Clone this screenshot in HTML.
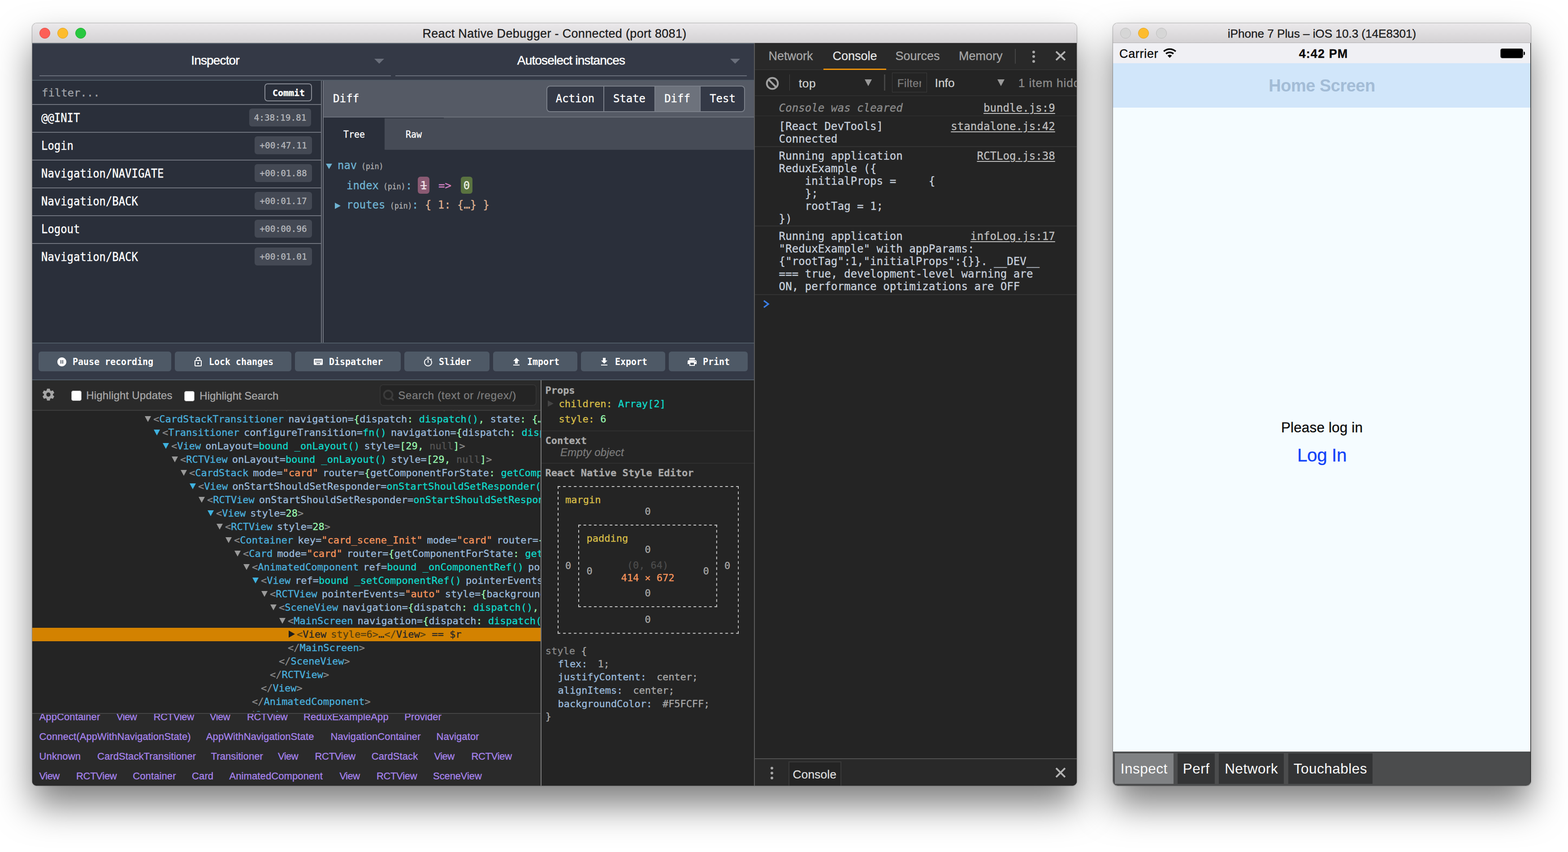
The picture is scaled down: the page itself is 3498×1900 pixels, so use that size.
<!DOCTYPE html>
<html lang="en"><head><meta charset="utf-8"><title>React Native Debugger</title>
<style>
html,body{margin:0;padding:0;background:#fff;}
body{width:3498px;height:1900px;position:relative;overflow:hidden;}
.t{position:absolute;line-height:0;white-space:pre;-webkit-text-stroke:0.35px;}
.t::before{content:"";display:inline-block;height:100px;width:0;}
.s{font-family:"Liberation Sans",sans-serif;}
.n{font-family:"DejaVu Sans Mono","Liberation Mono",monospace;}
.win{position:absolute;overflow:hidden;border-radius:10px;box-shadow:0 0 0 1px rgba(0,0,0,0.25),0 44px 80px 0 rgba(0,0,0,0.5),0 0 5px rgba(0,0,0,0.1);}
.pg{position:absolute;width:3498px;height:1900px;}
.tb{position:absolute;background:linear-gradient(#ebe9eb,#d3d1d3);box-shadow:inset 0 1px 0 #f4f3f4, inset 0 -1px 0 #b3b1b3;}
.dot{position:absolute;width:24px;height:24px;border-radius:50%;box-sizing:border-box;}
</style></head>
<body>
<div class="win" style="left:72px;top:51.6px;width:2330px;height:1700.7px;"><div class="pg" style="left:-72px;top:-51.6px;">
<div class="tb" style="left:72px;top:51.6px;width:2330px;height:44.4px;"></div>
<div class="dot" style="left:88px;top:62px;background:#fc5f57;border:1px solid #e0443e;"></div><div class="dot" style="left:128px;top:62px;background:#fdbc2e;border:1px solid #dea123;"></div><div class="dot" style="left:168px;top:62px;background:#28c840;border:1px solid #1dab2c;"></div>
<div class="t s" style="left:1237px;transform:translateX(-50%);top:-15.6px;font-size:27px;color:#1c1c1c;letter-spacing:0.32px;">React Native Debugger - Connected (port 8081)</div>
<div style="position:absolute;left:72px;top:96px;width:2330px;height:1656px;background:#242424;"></div>
<div style="position:absolute;left:72px;top:96px;width:1610px;height:84px;background:#343946;"></div>
<div style="position:absolute;left:72px;top:96px;width:1610px;height:2px;background:#4f5a65;"></div>
<div style="position:absolute;left:72px;top:178px;width:1610px;height:2px;background:#4f5a65;"></div>
<div style="position:absolute;left:88px;top:168px;width:784px;height:2px;background:#6a6f7b;"></div>
<div style="position:absolute;left:882px;top:168px;width:784px;height:2px;background:#6a6f7b;"></div>
<div style="position:absolute;left:835px;top:131px;width:0;height:0;border-left:11.0px solid transparent;border-right:11.0px solid transparent;border-top:11px solid #6a6f7b;"></div>
<div style="position:absolute;left:1629px;top:131px;width:0;height:0;border-left:11.0px solid transparent;border-right:11.0px solid transparent;border-top:11px solid #6a6f7b;"></div>
<div class="t s" style="left:480px;transform:translateX(-50%);top:44.3px;font-size:28px;color:#fff;letter-spacing:-0.85px;-webkit-text-stroke:0.5px #fff;">Inspector</div>
<div class="t s" style="left:1274px;transform:translateX(-50%);top:44.3px;font-size:28px;color:#fff;letter-spacing:-0.82px;-webkit-text-stroke:0.5px #fff;">Autoselect instances</div>
<div style="position:absolute;left:72px;top:180px;width:650px;height:584px;background:#2a2f3a;"></div>
<div style="position:absolute;left:716px;top:180px;width:2px;height:584px;background:#6f737d;"></div>
<div style="position:absolute;left:720px;top:180px;width:2px;height:584px;background:#6f737d;"></div>
<div class="t n" style="left:93px;top:114.5px;font-size:23.04px;color:#a0a3a8;transform-origin:0 0;transform:scaleX(1.0382);">filter...</div>
<div style="position:absolute;left:590px;top:186px;width:106px;height:39.5px;box-sizing:border-box;border:2px solid #888c95;border-radius:7px;"></div>
<div class="t n" style="left:643.5px;transform:translateX(-50%) scaleX(1.0382);top:113.6px;font-size:19.2px;color:#fff;font-weight:700;">Commit</div>
<div style="position:absolute;left:72px;top:232px;width:644px;height:2px;background:#6f737d;"></div>
<div class="t n" style="left:91.5px;top:172.2px;font-size:26.64px;color:#fff;transform-origin:0 0;transform:scaleX(0.8979);">@@INIT</div>
<div style="position:absolute;left:556px;top:242px;width:138px;height:40px;background:#444954;border-radius:6px;"></div>
<div class="t n" style="left:625.0px;transform:translateX(-50%) scaleX(0.9967);top:169.3px;font-size:19.5px;color:#b6b8bc;">4:38:19.81</div>
<div style="position:absolute;left:72px;top:294px;width:644px;height:2px;background:#6f737d;"></div>
<div class="t n" style="left:91.5px;top:234.2px;font-size:26.64px;color:#fff;transform-origin:0 0;transform:scaleX(0.8979);">Login</div>
<div style="position:absolute;left:568px;top:304px;width:128px;height:40px;background:#444954;border-radius:6px;"></div>
<div class="t n" style="left:632.0px;transform:translateX(-50%) scaleX(0.9967);top:231.3px;font-size:19.5px;color:#b6b8bc;">+00:47.11</div>
<div style="position:absolute;left:72px;top:356px;width:644px;height:2px;background:#6f737d;"></div>
<div class="t n" style="left:91.5px;top:296.2px;font-size:26.64px;color:#fff;transform-origin:0 0;transform:scaleX(0.8979);">Navigation/NAVIGATE</div>
<div style="position:absolute;left:568px;top:366px;width:128px;height:40px;background:#444954;border-radius:6px;"></div>
<div class="t n" style="left:632.0px;transform:translateX(-50%) scaleX(0.9967);top:293.3px;font-size:19.5px;color:#b6b8bc;">+00:01.88</div>
<div style="position:absolute;left:72px;top:418px;width:644px;height:2px;background:#6f737d;"></div>
<div class="t n" style="left:91.5px;top:358.2px;font-size:26.64px;color:#fff;transform-origin:0 0;transform:scaleX(0.8979);">Navigation/BACK</div>
<div style="position:absolute;left:568px;top:428px;width:128px;height:40px;background:#444954;border-radius:6px;"></div>
<div class="t n" style="left:632.0px;transform:translateX(-50%) scaleX(0.9967);top:355.3px;font-size:19.5px;color:#b6b8bc;">+00:01.17</div>
<div style="position:absolute;left:72px;top:480px;width:644px;height:2px;background:#6f737d;"></div>
<div class="t n" style="left:91.5px;top:420.2px;font-size:26.64px;color:#fff;transform-origin:0 0;transform:scaleX(0.8979);">Logout</div>
<div style="position:absolute;left:568px;top:490px;width:128px;height:40px;background:#444954;border-radius:6px;"></div>
<div class="t n" style="left:632.0px;transform:translateX(-50%) scaleX(0.9967);top:417.3px;font-size:19.5px;color:#b6b8bc;">+00:00.96</div>
<div style="position:absolute;left:72px;top:542px;width:644px;height:2px;background:#6f737d;"></div>
<div class="t n" style="left:91.5px;top:482.2px;font-size:26.64px;color:#fff;transform-origin:0 0;transform:scaleX(0.8979);">Navigation/BACK</div>
<div style="position:absolute;left:568px;top:552px;width:128px;height:40px;background:#444954;border-radius:6px;"></div>
<div class="t n" style="left:632.0px;transform:translateX(-50%) scaleX(0.9967);top:479.3px;font-size:19.5px;color:#b6b8bc;">+00:01.01</div>
<div style="position:absolute;left:722px;top:180px;width:960px;height:584px;background:#2a2f3a;"></div>
<div style="position:absolute;left:722px;top:180px;width:960px;height:82px;background:#555a65;"></div>
<div style="position:absolute;left:722px;top:260px;width:960px;height:2px;background:#6b707a;"></div>
<div class="t n" style="left:742.5px;top:127.8px;font-size:25.27px;color:#fff;transform-origin:0 0;transform:scaleX(0.9583);">Diff</div>
<div style="position:absolute;left:1218.5px;top:190.5px;width:443.0px;height:59.0px;box-sizing:border-box;border:2px solid #7b808a;border-radius:8px;background:#343946;overflow:hidden;"><div style="position:absolute;left:240.5px;top:0;width:100.5px;height:100%;background:#6d727c;"></div><div style="position:absolute;left:125.20000000000005px;top:0;width:2px;height:100%;background:#7b808a;"></div><div style="position:absolute;left:239.5px;top:0;width:2px;height:100%;background:#7b808a;"></div><div style="position:absolute;left:340.0px;top:0;width:2px;height:100%;background:#7b808a;"></div></div>
<div class="t n" style="left:1282.6px;transform:translateX(-50%) scaleX(0.9583);top:127.8px;font-size:24.96px;color:#fff;">Action</div>
<div class="t n" style="left:1403.8px;transform:translateX(-50%) scaleX(0.9583);top:127.8px;font-size:24.96px;color:#fff;">State</div>
<div class="t n" style="left:1511.2px;transform:translateX(-50%) scaleX(0.9583);top:127.8px;font-size:24.96px;color:#fff;">Diff</div>
<div class="t n" style="left:1611.5px;transform:translateX(-50%) scaleX(0.9583);top:127.8px;font-size:24.96px;color:#fff;">Test</div>
<div style="position:absolute;left:722px;top:262px;width:960px;height:72px;background:#464b56;"></div>
<div style="position:absolute;left:722px;top:262px;width:136px;height:72px;background:#2a2f3a;"></div>
<div style="position:absolute;left:858px;top:262px;width:132px;height:1.5px;background:#2f343f;"></div>
<div class="t n" style="left:789.7px;transform:translateX(-50%) scaleX(0.9228);top:207.4px;font-size:21.6px;color:#fff;">Tree</div>
<div class="t n" style="left:923px;transform:translateX(-50%) scaleX(0.9228);top:207.4px;font-size:21.6px;color:#fff;">Raw</div>
<div style="position:absolute;left:726.6px;top:364.5px;width:0;height:0;border-left:7.1px solid transparent;border-right:7.1px solid transparent;border-top:12.2px solid #6fb3d2;"></div>
<div class="t n" style="left:752.5px;top:277.2px;font-size:25.44px;color:#6fb3d2;transform-origin:0 0;transform:scaleX(0.9403);">nav</div>
<div class="t n" style="left:806px;top:277.2px;font-size:17.49px;color:#b0b0b0;transform-origin:0 0;transform:scaleX(0.9403);">(pin)</div>
<div class="t n" style="left:773px;top:321.5px;font-size:25.44px;color:#6fb3d2;transform-origin:0 0;transform:scaleX(0.9403);">index</div>
<div class="t n" style="left:855px;top:321.5px;font-size:17.49px;color:#b0b0b0;transform-origin:0 0;transform:scaleX(0.9403);">(pin)</div>
<div class="t n" style="left:904.5px;top:321.5px;font-size:25.44px;color:#6fb3d2;transform-origin:0 0;transform:scaleX(0.9403);">:</div>
<div style="position:absolute;left:931.8px;top:394px;width:26.2px;height:37.6px;background:#8a5a73;border-radius:6px;"></div>
<div class="t n" style="left:944.9px;transform:translateX(-50%) scaleX(0.9403);top:321.5px;font-size:25.44px;color:#f3e6ec;text-decoration:line-through;">1</div>
<div class="t n" style="left:978px;top:321.5px;font-size:25.44px;color:#d381c3;transform-origin:0 0;transform:scaleX(0.9403);">=&gt;</div>
<div style="position:absolute;left:1028px;top:394px;width:26px;height:37.6px;background:#5a7340;border-radius:6px;"></div>
<div class="t n" style="left:1041px;transform:translateX(-50%) scaleX(0.9403);top:321.5px;font-size:25.44px;color:#eef3e6;">0</div>
<div style="position:absolute;left:747px;top:452px;width:0;height:0;border-top:7.0px solid transparent;border-bottom:7.0px solid transparent;border-left:13px solid #6fb3d2;"></div>
<div class="t n" style="left:773px;top:365px;font-size:25.44px;color:#6fb3d2;transform-origin:0 0;transform:scaleX(0.9403);">routes</div>
<div class="t n" style="left:870px;top:365px;font-size:17.49px;color:#b0b0b0;transform-origin:0 0;transform:scaleX(0.9403);">(pin)</div>
<div class="t n" style="left:919px;top:365px;font-size:25.44px;color:#6fb3d2;transform-origin:0 0;transform:scaleX(0.9403);">:</div>
<div class="t n" style="left:947.5px;top:365px;font-size:25.44px;color:#deaf8f;transform-origin:0 0;transform:scaleX(0.9403);">{ 1: {…} }</div>
<div style="position:absolute;left:72px;top:764px;width:1610px;height:84px;background:#343946;"></div>
<div style="position:absolute;left:72px;top:764px;width:1610px;height:2px;background:#4f5a65;"></div>
<div style="position:absolute;left:72px;top:846px;width:1610px;height:2px;background:#4f5a65;"></div>
<div style="position:absolute;left:86px;top:784px;width:296px;height:44px;background:#4e5966;border-radius:6px;"></div>
<svg style="position:absolute;left:125.5px;top:795.3px" width="24" height="24" viewBox="0 0 24 24"><path fill="#fff" d="M12 2C6.48 2 2 6.48 2 12s4.48 10 10 10 10-4.48 10-10S17.52 2 12 2zm-1 14H9V8h2v8zm4 0h-2V8h2v8z"/></svg>
<div class="t n" style="left:162.0px;top:714px;font-size:21.2px;color:#fff;transform-origin:0 0;transform:scaleX(0.9403);font-weight:700;-webkit-text-stroke:0;">Pause recording</div>
<div style="position:absolute;left:390px;top:784px;width:260px;height:44px;background:#4e5966;border-radius:6px;"></div>
<svg style="position:absolute;left:429.5px;top:795.3px" width="24" height="24" viewBox="0 0 24 24"><path fill="#fff" d="M12 17c1.1 0 2-.9 2-2s-.9-2-2-2-2 .9-2 2 .9 2 2 2zm6-9h-1V6c0-2.76-2.24-5-5-5S7 3.24 7 6v2H6c-1.1 0-2 .9-2 2v10c0 1.1.9 2 2 2h12c1.1 0 2-.9 2-2V10c0-1.1-.9-2-2-2zM8.9 6c0-1.71 1.39-3.1 3.1-3.1s3.1 1.39 3.1 3.1v2H8.9V6zM18 20H6V10h12v10z"/></svg>
<div class="t n" style="left:466.0px;top:714px;font-size:21.2px;color:#fff;transform-origin:0 0;transform:scaleX(0.9403);font-weight:700;-webkit-text-stroke:0;">Lock changes</div>
<div style="position:absolute;left:658px;top:784px;width:236px;height:44px;background:#4e5966;border-radius:6px;"></div>
<svg style="position:absolute;left:697.5px;top:795.3px" width="24" height="24" viewBox="0 0 24 24"><path fill="#fff" d="M20 5H4c-1.1 0-1.99.9-1.99 2L2 17c0 1.1.9 2 2 2h16c1.1 0 2-.9 2-2V7c0-1.1-.9-2-2-2zm-9 3h2v2h-2V8zm0 3h2v2h-2v-2zM8 8h2v2H8V8zm0 3h2v2H8v-2zm-1 2H5v-2h2v2zm0-3H5V8h2v2zm9 7H8v-2h8v2zm0-4h-2v-2h2v2zm0-3h-2V8h2v2zm3 3h-2v-2h2v2zm0-3h-2V8h2v2z"/></svg>
<div class="t n" style="left:734.0px;top:714px;font-size:21.2px;color:#fff;transform-origin:0 0;transform:scaleX(0.9403);font-weight:700;-webkit-text-stroke:0;">Dispatcher</div>
<div style="position:absolute;left:902px;top:784px;width:190px;height:44px;background:#4e5966;border-radius:6px;"></div>
<svg style="position:absolute;left:942.5px;top:795.3px" width="24" height="24" viewBox="0 0 24 24"><path fill="#fff" d="M15 1H9v2h6V1zm-4 13h2V8h-2v6zm8.03-6.61l1.42-1.42c-.43-.51-.9-.99-1.41-1.41l-1.42 1.42C16.07 4.74 14.12 4 12 4c-4.97 0-9 4.03-9 9s4.02 9 9 9 9-4.03 9-9c0-2.12-.74-4.07-1.97-5.61zM12 20c-3.87 0-7-3.13-7-7s3.13-7 7-7 7 3.13 7 7-3.13 7-7 7z"/></svg>
<div class="t n" style="left:979.0px;top:714px;font-size:21.2px;color:#fff;transform-origin:0 0;transform:scaleX(0.9403);font-weight:700;-webkit-text-stroke:0;">Slider</div>
<div style="position:absolute;left:1100px;top:784px;width:188px;height:44px;background:#4e5966;border-radius:6px;"></div>
<svg style="position:absolute;left:1139.5px;top:795.3px" width="24" height="24" viewBox="0 0 24 24"><path fill="#fff" d="M9 16h6v-6h4l-7-7-7 7h4zm-4 2h14v2H5z"/></svg>
<div class="t n" style="left:1176.0px;top:714px;font-size:21.2px;color:#fff;transform-origin:0 0;transform:scaleX(0.9403);font-weight:700;-webkit-text-stroke:0;">Import</div>
<div style="position:absolute;left:1296px;top:784px;width:188px;height:44px;background:#4e5966;border-radius:6px;"></div>
<svg style="position:absolute;left:1335.5px;top:795.3px" width="24" height="24" viewBox="0 0 24 24"><path fill="#fff" d="M19 9h-4V3H9v6H5l7 7 7-7zM5 18v2h14v-2H5z"/></svg>
<div class="t n" style="left:1372.0px;top:714px;font-size:21.2px;color:#fff;transform-origin:0 0;transform:scaleX(0.9403);font-weight:700;-webkit-text-stroke:0;">Export</div>
<div style="position:absolute;left:1492px;top:784px;width:176px;height:44px;background:#4e5966;border-radius:6px;"></div>
<svg style="position:absolute;left:1531.5px;top:795.3px" width="24" height="24" viewBox="0 0 24 24"><path fill="#fff" d="M19 8H5c-1.66 0-3 1.34-3 3v6h4v4h12v-4h4v-6c0-1.66-1.34-3-3-3zm-3 11H8v-5h8v5zm3-7c-.55 0-1-.45-1-1s.45-1 1-1 1 .45 1 1-.45 1-1 1zm-1-9H6v4h12V3z"/></svg>
<div class="t n" style="left:1568.0px;top:714px;font-size:21.2px;color:#fff;transform-origin:0 0;transform:scaleX(0.9403);font-weight:700;-webkit-text-stroke:0;">Print</div>
<div style="position:absolute;left:72px;top:848px;width:1610px;height:904px;background:#242424;"></div>
<div style="position:absolute;left:72px;top:848px;width:1134px;height:67px;background:#2a2a2a;"></div>
<div style="position:absolute;left:72px;top:914.3px;width:1134px;height:1.9px;background:#3d3d3d;"></div>
<svg style="position:absolute;left:92px;top:864px" width="32" height="32" viewBox="0 0 24 24"><path fill="#a5a5a5" d="M19.43 12.98c.04-.32.07-.64.07-.98s-.03-.66-.07-.98l2.11-1.65c.19-.15.24-.42.12-.64l-2-3.46c-.12-.22-.39-.3-.61-.22l-2.49 1c-.52-.4-1.08-.73-1.69-.98l-.38-2.65C14.46 2.18 14.25 2 14 2h-4c-.25 0-.46.18-.49.42l-.38 2.65c-.61.25-1.17.59-1.69.98l-2.49-1c-.23-.09-.49 0-.61.22l-2 3.46c-.13.22-.07.49.12.64l2.11 1.65c-.04.32-.07.65-.07.98s.03.66.07.98l-2.11 1.65c-.19.15-.24.42-.12.64l2 3.46c.12.22.39.3.61.22l2.49-1c.52.4 1.08.73 1.69.98l.38 2.65c.03.24.24.42.49.42h4c.25 0 .46-.18.49-.42l.38-2.65c.61-.25 1.17-.59 1.69-.98l2.49 1c.23.09.49 0 .61-.22l2-3.46c.12-.22.07-.49-.12-.64l-2.11-1.65zM12 15.5c-1.93 0-3.5-1.57-3.5-3.5s1.57-3.5 3.5-3.5 3.5 1.57 3.5 3.5-1.57 3.5-3.5 3.5z"/></svg>
<div style="position:absolute;left:158.5px;top:870.5px;width:23.0px;height:23.0px;background:#fff;border-radius:5px;box-shadow:0 0 0 1px #9a9a9a inset;"></div>
<div class="t s" style="left:192.3px;top:789.5px;font-size:24px;color:#a8a8a8;letter-spacing:0.18px;">Highlight Updates</div>
<div style="position:absolute;left:410.5px;top:872.2px;width:23.0px;height:23.0px;background:#fff;border-radius:5px;box-shadow:0 0 0 1px #9a9a9a inset;"></div>
<div class="t s" style="left:445.3px;top:791.4px;font-size:24px;color:#a8a8a8;">Highlight Search</div>
<div style="position:absolute;left:847px;top:857px;width:350px;height:48px;box-sizing:border-box;border:2px solid #333;border-radius:8px;background:#242424;"></div>
<svg style="position:absolute;left:853px;top:868px" width="28" height="28" viewBox="0 0 28 28"><circle cx="13" cy="12.5" r="9.5" fill="none" stroke="#3b3b3b" stroke-width="3.8"/><path d="M19.5 19.5l4.5 4.5" stroke="#3b3b3b" stroke-width="4" stroke-linecap="round"/></svg>
<div class="t s" style="left:888.3px;top:790px;font-size:24px;color:#7d7d7d;letter-spacing:0.76px;">Search (text or /regex/)</div>
<div style="position:absolute;left:72px;top:916px;width:1134px;height:670.6px;overflow:hidden;"><div class="pg" style="left:-72px;top:-916px;"><div style="position:absolute;left:322.5px;top:928.0px;width:0;height:0;border-left:7.7px solid transparent;border-right:7.7px solid transparent;border-top:13.4px solid #9a9a9a;"></div>
<div class="t n" style="left:341.9px;top:841.6px;font-size:22px;color:#9bbbdc;"><span style="color:#8a8a8a">&lt;</span><span style="color:#4ab0de">CardStackTransitioner</span><span style="margin-left:10px;color:#9bbbdc">navigation=</span><span style="color:#98f5ae">{</span><span style="color:#9bbbdc">dispatch</span><span style="color:#98f5ae">: </span><span style="color:#10dacb">dispatch()</span><span style="color:#98f5ae">, </span><span style="color:#9bbbdc">state</span><span style="color:#98f5ae">: </span><span style="color:#98f5ae">{…}</span><span style="color:#98f5ae">}</span><span style="margin-left:10px;color:#9bbbdc">render=</span><span style="color:#10dacb">render()</span></div>
<div style="position:absolute;left:342.5px;top:958.0px;width:0;height:0;border-left:7.7px solid transparent;border-right:7.7px solid transparent;border-top:13.4px solid #3fb2e0;"></div>
<div class="t n" style="left:361.9px;top:871.6px;font-size:22px;color:#9bbbdc;"><span style="color:#8a8a8a">&lt;</span><span style="color:#4ab0de">Transitioner</span><span style="margin-left:10px;color:#9bbbdc">configureTransition=</span><span style="color:#10dacb">fn()</span><span style="margin-left:10px;color:#9bbbdc">navigation=</span><span style="color:#98f5ae">{</span><span style="color:#9bbbdc">dispatch</span><span style="color:#98f5ae">: </span><span style="color:#10dacb">dispatch()</span><span style="color:#98f5ae">, </span><span style="color:#9bbbdc">state</span><span style="color:#98f5ae">: </span><span style="color:#98f5ae">{…}</span><span style="color:#98f5ae">}</span></div>
<div style="position:absolute;left:362.5px;top:988.0px;width:0;height:0;border-left:7.7px solid transparent;border-right:7.7px solid transparent;border-top:13.4px solid #3fb2e0;"></div>
<div class="t n" style="left:381.9px;top:901.6px;font-size:22px;color:#9bbbdc;"><span style="color:#8a8a8a">&lt;</span><span style="color:#4ab0de">View</span><span style="margin-left:10px;color:#9bbbdc">onLayout=</span><span style="color:#10dacb">bound _onLayout()</span><span style="margin-left:10px;color:#9bbbdc">style=</span><span style="color:#98f5ae">[29, </span><span style="color:#555">null</span><span style="color:#98f5ae">]</span><span style="color:#8a8a8a">&gt;</span></div>
<div style="position:absolute;left:382.5px;top:1017.9999999999999px;width:0;height:0;border-left:7.7px solid transparent;border-right:7.7px solid transparent;border-top:13.4px solid #9a9a9a;"></div>
<div class="t n" style="left:401.9px;top:931.6px;font-size:22px;color:#9bbbdc;"><span style="color:#8a8a8a">&lt;</span><span style="color:#4ab0de">RCTView</span><span style="margin-left:10px;color:#9bbbdc">onLayout=</span><span style="color:#10dacb">bound _onLayout()</span><span style="margin-left:10px;color:#9bbbdc">style=</span><span style="color:#98f5ae">[29, </span><span style="color:#555">null</span><span style="color:#98f5ae">]</span><span style="color:#8a8a8a">&gt;</span></div>
<div style="position:absolute;left:402.5px;top:1048.0px;width:0;height:0;border-left:7.7px solid transparent;border-right:7.7px solid transparent;border-top:13.4px solid #9a9a9a;"></div>
<div class="t n" style="left:421.9px;top:961.6px;font-size:22px;color:#9bbbdc;"><span style="color:#8a8a8a">&lt;</span><span style="color:#4ab0de">CardStack</span><span style="margin-left:10px;color:#9bbbdc">mode=</span><span style="color:#f7955c">"card"</span><span style="margin-left:10px;color:#9bbbdc">router=</span><span style="color:#98f5ae">{</span><span style="color:#9bbbdc">getComponentForState</span><span style="color:#98f5ae">: </span><span style="color:#10dacb">getComponentForState()</span><span style="color:#98f5ae">}</span></div>
<div style="position:absolute;left:422.5px;top:1078.0px;width:0;height:0;border-left:7.7px solid transparent;border-right:7.7px solid transparent;border-top:13.4px solid #3fb2e0;"></div>
<div class="t n" style="left:441.9px;top:991.6px;font-size:22px;color:#9bbbdc;"><span style="color:#8a8a8a">&lt;</span><span style="color:#4ab0de">View</span><span style="margin-left:10px;color:#9bbbdc">onStartShouldSetResponder=</span><span style="color:#10dacb">onStartShouldSetResponder()</span><span style="margin-left:10px;color:#9bbbdc">style=</span><span style="color:#98f5ae">{…}</span></div>
<div style="position:absolute;left:442.5px;top:1108.0px;width:0;height:0;border-left:7.7px solid transparent;border-right:7.7px solid transparent;border-top:13.4px solid #9a9a9a;"></div>
<div class="t n" style="left:461.9px;top:1021.6px;font-size:22px;color:#9bbbdc;"><span style="color:#8a8a8a">&lt;</span><span style="color:#4ab0de">RCTView</span><span style="margin-left:10px;color:#9bbbdc">onStartShouldSetResponder=</span><span style="color:#10dacb">onStartShouldSetResponder()</span><span style="margin-left:10px;color:#9bbbdc">style=</span><span style="color:#98f5ae">{…}</span></div>
<div style="position:absolute;left:462.5px;top:1138.0px;width:0;height:0;border-left:7.7px solid transparent;border-right:7.7px solid transparent;border-top:13.4px solid #3fb2e0;"></div>
<div class="t n" style="left:481.9px;top:1051.6px;font-size:22px;color:#9bbbdc;"><span style="color:#8a8a8a">&lt;</span><span style="color:#4ab0de">View</span><span style="margin-left:10px;color:#9bbbdc">style=</span><span style="color:#98f5ae">28</span><span style="color:#8a8a8a">&gt;</span></div>
<div style="position:absolute;left:482.5px;top:1168.0px;width:0;height:0;border-left:7.7px solid transparent;border-right:7.7px solid transparent;border-top:13.4px solid #9a9a9a;"></div>
<div class="t n" style="left:501.9px;top:1081.6px;font-size:22px;color:#9bbbdc;"><span style="color:#8a8a8a">&lt;</span><span style="color:#4ab0de">RCTView</span><span style="margin-left:10px;color:#9bbbdc">style=</span><span style="color:#98f5ae">28</span><span style="color:#8a8a8a">&gt;</span></div>
<div style="position:absolute;left:502.5px;top:1198.0px;width:0;height:0;border-left:7.7px solid transparent;border-right:7.7px solid transparent;border-top:13.4px solid #9a9a9a;"></div>
<div class="t n" style="left:521.9px;top:1111.6px;font-size:22px;color:#9bbbdc;"><span style="color:#8a8a8a">&lt;</span><span style="color:#4ab0de">Container</span><span style="margin-left:10px;color:#9bbbdc">key=</span><span style="color:#f7955c">"card_scene_Init"</span><span style="margin-left:10px;color:#9bbbdc">mode=</span><span style="color:#f7955c">"card"</span><span style="margin-left:10px;color:#9bbbdc">router=</span><span style="color:#98f5ae">{</span><span style="color:#9bbbdc">getComponentForState</span><span style="color:#98f5ae">: </span><span style="color:#10dacb">getComponentForState()</span><span style="color:#98f5ae">}</span></div>
<div style="position:absolute;left:522.5px;top:1228.0px;width:0;height:0;border-left:7.7px solid transparent;border-right:7.7px solid transparent;border-top:13.4px solid #9a9a9a;"></div>
<div class="t n" style="left:541.9px;top:1141.6px;font-size:22px;color:#9bbbdc;"><span style="color:#8a8a8a">&lt;</span><span style="color:#4ab0de">Card</span><span style="margin-left:10px;color:#9bbbdc">mode=</span><span style="color:#f7955c">"card"</span><span style="margin-left:10px;color:#9bbbdc">router=</span><span style="color:#98f5ae">{</span><span style="color:#9bbbdc">getComponentForState</span><span style="color:#98f5ae">: </span><span style="color:#10dacb">getComponentForState()</span><span style="color:#98f5ae">}</span></div>
<div style="position:absolute;left:542.5px;top:1258.0px;width:0;height:0;border-left:7.7px solid transparent;border-right:7.7px solid transparent;border-top:13.4px solid #9a9a9a;"></div>
<div class="t n" style="left:561.9px;top:1171.6px;font-size:22px;color:#9bbbdc;"><span style="color:#8a8a8a">&lt;</span><span style="color:#4ab0de">AnimatedComponent</span><span style="margin-left:10px;color:#9bbbdc">ref=</span><span style="color:#10dacb">bound _onComponentRef()</span><span style="margin-left:10px;color:#9bbbdc">pointerEvents=</span><span style="color:#f7955c">"auto"</span></div>
<div style="position:absolute;left:562.5px;top:1288.0px;width:0;height:0;border-left:7.7px solid transparent;border-right:7.7px solid transparent;border-top:13.4px solid #3fb2e0;"></div>
<div class="t n" style="left:581.9px;top:1201.6px;font-size:22px;color:#9bbbdc;"><span style="color:#8a8a8a">&lt;</span><span style="color:#4ab0de">View</span><span style="margin-left:10px;color:#9bbbdc">ref=</span><span style="color:#10dacb">bound _setComponentRef()</span><span style="margin-left:10px;color:#9bbbdc">pointerEvents=</span><span style="color:#f7955c">"auto"</span></div>
<div style="position:absolute;left:582.5px;top:1318.0px;width:0;height:0;border-left:7.7px solid transparent;border-right:7.7px solid transparent;border-top:13.4px solid #9a9a9a;"></div>
<div class="t n" style="left:601.9px;top:1231.6px;font-size:22px;color:#9bbbdc;"><span style="color:#8a8a8a">&lt;</span><span style="color:#4ab0de">RCTView</span><span style="margin-left:10px;color:#9bbbdc">pointerEvents=</span><span style="color:#f7955c">"auto"</span><span style="margin-left:10px;color:#9bbbdc">style=</span><span style="color:#98f5ae">{</span><span style="color:#9bbbdc">backgroundColor</span><span style="color:#98f5ae">: </span><span style="color:#f7955c">"#E9E9EF"</span><span style="color:#98f5ae">}</span></div>
<div style="position:absolute;left:602.5px;top:1348.0px;width:0;height:0;border-left:7.7px solid transparent;border-right:7.7px solid transparent;border-top:13.4px solid #9a9a9a;"></div>
<div class="t n" style="left:621.9px;top:1261.6px;font-size:22px;color:#9bbbdc;"><span style="color:#8a8a8a">&lt;</span><span style="color:#4ab0de">SceneView</span><span style="margin-left:10px;color:#9bbbdc">navigation=</span><span style="color:#98f5ae">{</span><span style="color:#9bbbdc">dispatch</span><span style="color:#98f5ae">: </span><span style="color:#10dacb">dispatch()</span><span style="color:#98f5ae">, </span><span style="color:#9bbbdc">state</span><span style="color:#98f5ae">: </span><span style="color:#98f5ae">{…}</span><span style="color:#98f5ae">}</span></div>
<div style="position:absolute;left:622.5px;top:1378.0px;width:0;height:0;border-left:7.7px solid transparent;border-right:7.7px solid transparent;border-top:13.4px solid #9a9a9a;"></div>
<div class="t n" style="left:641.9px;top:1291.6px;font-size:22px;color:#9bbbdc;"><span style="color:#8a8a8a">&lt;</span><span style="color:#4ab0de">MainScreen</span><span style="margin-left:10px;color:#9bbbdc">navigation=</span><span style="color:#98f5ae">{</span><span style="color:#9bbbdc">dispatch</span><span style="color:#98f5ae">: </span><span style="color:#10dacb">dispatch()</span><span style="color:#98f5ae">, </span><span style="color:#9bbbdc">state</span><span style="color:#98f5ae">: </span><span style="color:#98f5ae">{…}</span><span style="color:#98f5ae">}</span><span style="color:#8a8a8a">&gt;</span></div>
<div style="position:absolute;left:72px;top:1400px;width:1134px;height:30px;background:#d38200;"></div>
<div style="position:absolute;left:644.0px;top:1406.1999999999998px;width:0;height:0;border-top:8.0px solid transparent;border-bottom:8.0px solid transparent;border-left:14px solid #1d1d1d;"></div>
<div class="t n" style="left:661.9px;top:1321.6px;font-size:22px;color:#262626;"><span style="color:#5a4210">&lt;</span><span style="color:#262626">View</span><span style="margin-left:10px;color:#57400f">style=6</span><span style="color:#5a4210">&gt;</span><span style="color:#262626">…</span><span style="color:#5a4210">&lt;/</span><span style="color:#262626">View</span><span style="color:#5a4210">&gt;</span><span style="color:#262626"> == $r</span></div>
<div class="t n" style="left:641.9px;top:1351.6px;font-size:22px;color:#9bbbdc;"><span style="color:#8a8a8a">&lt;/</span><span style="color:#4ab0de">MainScreen</span><span style="color:#8a8a8a">&gt;</span></div>
<div class="t n" style="left:621.9px;top:1381.6px;font-size:22px;color:#9bbbdc;"><span style="color:#8a8a8a">&lt;/</span><span style="color:#4ab0de">SceneView</span><span style="color:#8a8a8a">&gt;</span></div>
<div class="t n" style="left:601.9px;top:1411.6px;font-size:22px;color:#9bbbdc;"><span style="color:#8a8a8a">&lt;/</span><span style="color:#4ab0de">RCTView</span><span style="color:#8a8a8a">&gt;</span></div>
<div class="t n" style="left:581.9px;top:1441.6px;font-size:22px;color:#9bbbdc;"><span style="color:#8a8a8a">&lt;/</span><span style="color:#4ab0de">View</span><span style="color:#8a8a8a">&gt;</span></div>
<div class="t n" style="left:561.9px;top:1471.6px;font-size:22px;color:#9bbbdc;"><span style="color:#8a8a8a">&lt;/</span><span style="color:#4ab0de">AnimatedComponent</span><span style="color:#8a8a8a">&gt;</span></div>
<div class="t n" style="left:541.9px;top:1501.6px;font-size:22px;color:#9bbbdc;"><span style="color:#8a8a8a">&lt;/</span><span style="color:#4ab0de">Card</span><span style="color:#8a8a8a">&gt;</span></div>
<div class="t n" style="left:321.9px;top:811.6px;font-size:22px;color:#9bbbdc;"><span style="color:#8a8a8a">&lt;</span><span style="color:#4ab0de">Unknown</span><span style="margin-left:10px;color:#9bbbdc">navigation=</span><span style="color:#98f5ae">{</span><span style="color:#9bbbdc">dispatch</span><span style="color:#98f5ae">: </span><span style="color:#10dacb">dispatch()</span><span style="color:#98f5ae">, </span><span style="color:#9bbbdc">state</span><span style="color:#98f5ae">: </span><span style="color:#98f5ae">{…}</span><span style="color:#98f5ae">}</span></div></div></div>
<div style="position:absolute;left:72px;top:1590px;width:1134px;height:162px;background:#2a2a2a;overflow:hidden;"><div class="pg" style="left:-72px;top:-1590px;"><div class="t s" style="left:87.6px;top:1506px;font-size:22px;color:#a582ea;letter-spacing:0.1px;">AppContainer</div>
<div class="t s" style="left:260px;top:1506px;font-size:22px;color:#a582ea;letter-spacing:-0.55px;">View</div>
<div class="t s" style="left:342.4px;top:1506px;font-size:22px;color:#a582ea;letter-spacing:-0.3px;">RCTView</div>
<div class="t s" style="left:468px;top:1506px;font-size:22px;color:#a582ea;letter-spacing:-0.55px;">View</div>
<div class="t s" style="left:551px;top:1506px;font-size:22px;color:#a582ea;letter-spacing:-0.3px;">RCTView</div>
<div class="t s" style="left:676.9px;top:1506px;font-size:22px;color:#a582ea;letter-spacing:0.1px;">ReduxExampleApp</div>
<div class="t s" style="left:902.3px;top:1506px;font-size:22px;color:#a582ea;letter-spacing:0.1px;">Provider</div>
<div class="t s" style="left:87.6px;top:1550.2px;font-size:22px;color:#a582ea;letter-spacing:0.1px;">Connect(AppWithNavigationState)</div>
<div class="t s" style="left:459.8px;top:1550.2px;font-size:22px;color:#a582ea;letter-spacing:0.1px;">AppWithNavigationState</div>
<div class="t s" style="left:737.4px;top:1550.2px;font-size:22px;color:#a582ea;letter-spacing:0.1px;">NavigationContainer</div>
<div class="t s" style="left:973.6px;top:1550.2px;font-size:22px;color:#a582ea;letter-spacing:0.1px;">Navigator</div>
<div class="t s" style="left:87.6px;top:1594.1px;font-size:22px;color:#a582ea;letter-spacing:0.1px;">Unknown</div>
<div class="t s" style="left:217px;top:1594.1px;font-size:22px;color:#a582ea;letter-spacing:0.1px;">CardStackTransitioner</div>
<div class="t s" style="left:470.5px;top:1594.1px;font-size:22px;color:#a582ea;letter-spacing:0.1px;">Transitioner</div>
<div class="t s" style="left:620px;top:1594.1px;font-size:22px;color:#a582ea;letter-spacing:-0.55px;">View</div>
<div class="t s" style="left:702.5px;top:1594.1px;font-size:22px;color:#a582ea;letter-spacing:-0.3px;">RCTView</div>
<div class="t s" style="left:828.7px;top:1594.1px;font-size:22px;color:#a582ea;letter-spacing:0.1px;">CardStack</div>
<div class="t s" style="left:968.5px;top:1594.1px;font-size:22px;color:#a582ea;letter-spacing:-0.55px;">View</div>
<div class="t s" style="left:1051.4px;top:1594.1px;font-size:22px;color:#a582ea;letter-spacing:-0.3px;">RCTView</div>
<div class="t s" style="left:87.6px;top:1638px;font-size:22px;color:#a582ea;letter-spacing:-0.55px;">View</div>
<div class="t s" style="left:170px;top:1638px;font-size:22px;color:#a582ea;letter-spacing:-0.3px;">RCTView</div>
<div class="t s" style="left:296.3px;top:1638px;font-size:22px;color:#a582ea;letter-spacing:0.1px;">Container</div>
<div class="t s" style="left:428.1px;top:1638px;font-size:22px;color:#a582ea;letter-spacing:0.1px;">Card</div>
<div class="t s" style="left:511.5px;top:1638px;font-size:22px;color:#a582ea;letter-spacing:0.1px;">AnimatedComponent</div>
<div class="t s" style="left:757.4px;top:1638px;font-size:22px;color:#a582ea;letter-spacing:-0.55px;">View</div>
<div class="t s" style="left:839.9px;top:1638px;font-size:22px;color:#a582ea;letter-spacing:-0.3px;">RCTView</div>
<div class="t s" style="left:966.1px;top:1638px;font-size:22px;color:#a582ea;letter-spacing:-0.12px;">SceneView</div></div></div>
<div style="position:absolute;left:72px;top:1589.5px;width:1134px;height:2.0px;background:#444;"></div>
<div style="position:absolute;left:1205.8px;top:848px;width:2.2px;height:904px;background:#7c7c7c;"></div>
<div class="t n" style="left:1216.4px;top:778px;font-size:22px;color:#a9a9a9;font-weight:700;">Props</div>
<div style="position:absolute;left:1222px;top:892.5px;width:0;height:0;border-top:7.5px solid transparent;border-bottom:7.5px solid transparent;border-left:13.6px solid #444;"></div>
<div class="t n" style="left:1246.6px;top:808px;font-size:22px;color:#d8be48;"><span style="color:#d8be48">children: </span><span style="color:#10dacb">Array[2]</span></div>
<div class="t n" style="left:1246.6px;top:841.6px;font-size:22px;color:#d8be48;"><span style="color:#d8be48">style: </span><span style="color:#98f5ae">6</span></div>
<div style="position:absolute;left:1208px;top:960px;width:474px;height:2px;background:#2f2f2f;"></div>
<div class="t n" style="left:1216.4px;top:890px;font-size:22px;color:#a9a9a9;font-weight:700;">Context</div>
<div class="t s" style="left:1250px;top:917px;font-size:24px;color:#7a7a7a;letter-spacing:0.26px;font-style:italic;">Empty object</div>
<div style="position:absolute;left:1208px;top:1032px;width:474px;height:2px;background:#2f2f2f;"></div>
<div class="t n" style="left:1216.4px;top:962px;font-size:22px;color:#a9a9a9;font-weight:700;">React Native Style Editor</div>
<svg style="position:absolute;left:1244px;top:1084.4px" width="404.2" height="329.2" viewBox="0 0 404.2 329.2" fill="none" stroke="#c6c6c6" stroke-width="2"><path d="M0 1H404.2" stroke-dasharray="6 6.067"/><path d="M0 328.2H404.2" stroke-dasharray="6 6.067"/><path d="M1 0V329.2" stroke-dasharray="6 5.970"/><path d="M403.2 0V329.2" stroke-dasharray="6 5.970"/></svg>
<svg style="position:absolute;left:1290.2px;top:1170px" width="309.8" height="184" viewBox="0 0 309.8 184" fill="none" stroke="#c6c6c6" stroke-width="2"><path d="M0 1H309.8" stroke-dasharray="6 5.685"/><path d="M0 183H309.8" stroke-dasharray="6 5.685"/><path d="M1 0V184" stroke-dasharray="6 5.867"/><path d="M308.8 0V184" stroke-dasharray="6 5.867"/></svg>
<div class="t n" style="left:1261px;top:1021.9px;font-size:22px;color:#d8be48;">margin</div>
<div class="t n" style="left:1308.6px;top:1108.2px;font-size:22px;color:#d8be48;">padding</div>
<div class="t n" style="left:1445px;transform:translateX(-50%);top:1047.5px;font-size:22px;color:#a9a9a9;">0</div>
<div class="t n" style="left:1445px;transform:translateX(-50%);top:1133.3px;font-size:22px;color:#a9a9a9;">0</div>
<div class="t n" style="left:1445px;transform:translateX(-50%);top:1229.7px;font-size:22px;color:#a9a9a9;">0</div>
<div class="t n" style="left:1445px;transform:translateX(-50%);top:1289.4px;font-size:22px;color:#a9a9a9;">0</div>
<div class="t n" style="left:1267.6px;transform:translateX(-50%);top:1169px;font-size:22px;color:#a9a9a9;">0</div>
<div class="t n" style="left:1315px;transform:translateX(-50%);top:1181.3px;font-size:22px;color:#a9a9a9;">0</div>
<div class="t n" style="left:1575.2px;transform:translateX(-50%);top:1181.3px;font-size:22px;color:#a9a9a9;">0</div>
<div class="t n" style="left:1622.5px;transform:translateX(-50%);top:1169px;font-size:22px;color:#a9a9a9;">0</div>
<div class="t n" style="left:1445px;transform:translateX(-50%);top:1168px;font-size:22px;color:#4c4c4c;">(0, 64)</div>
<div class="t n" style="left:1445px;transform:translateX(-50%);top:1196.3px;font-size:22px;color:#f7955c;">414 × 672</div>
<div class="t n" style="left:1216.8px;top:1359px;font-size:22px;color:#a9a9a9;"><span style="color:#8a8a8a">style </span><span style="color:#a9a9a9">{</span></div>
<div class="t n" style="left:1244.6px;top:1387.6px;font-size:22px;color:#a9a9a9;letter-spacing:-0.1px;"><span style="color:#9bbbdc">flex:</span><span style="margin-left:10px;color:#a9a9a9"> 1;</span></div>
<div class="t n" style="left:1244.6px;top:1417.45px;font-size:22px;color:#a9a9a9;letter-spacing:-0.1px;"><span style="color:#9bbbdc">justifyContent:</span><span style="margin-left:10px;color:#a9a9a9"> center;</span></div>
<div class="t n" style="left:1244.6px;top:1447.3px;font-size:22px;color:#a9a9a9;letter-spacing:-0.1px;"><span style="color:#9bbbdc">alignItems:</span><span style="margin-left:10px;color:#a9a9a9"> center;</span></div>
<div class="t n" style="left:1244.6px;top:1477.15px;font-size:22px;color:#a9a9a9;letter-spacing:-0.1px;"><span style="color:#9bbbdc">backgroundColor:</span><span style="margin-left:10px;color:#a9a9a9"> #F5FCFF;</span></div>
<div class="t n" style="left:1216.8px;top:1505.4px;font-size:22px;color:#a9a9a9;">}</div>
<div style="position:absolute;left:1684px;top:96px;width:718px;height:1656px;background:#242424;"></div>
<div style="position:absolute;left:1682px;top:96px;width:2px;height:1656px;background:#5c5c5c;"></div>
<div style="position:absolute;left:1684px;top:96px;width:718px;height:59px;background:#292929;"></div>
<div style="position:absolute;left:1684px;top:154.5px;width:718px;height:1.5px;background:#3c3c3c;"></div>
<div class="t s" style="left:1714.5px;top:34.3px;font-size:27px;color:#a6a6a6;letter-spacing:0px;">Network</div>
<div class="t s" style="left:1857.5px;top:34.3px;font-size:27px;color:#e4e4e4;letter-spacing:0px;">Console</div>
<div class="t s" style="left:1997.5px;top:34.3px;font-size:27px;color:#a6a6a6;letter-spacing:0px;">Sources</div>
<div class="t s" style="left:2139.1px;top:34.3px;font-size:27px;color:#a6a6a6;letter-spacing:0px;">Memory</div>
<div style="position:absolute;left:1837px;top:153px;width:140px;height:3.2px;background:#e8900c;"></div>
<div style="position:absolute;left:2264.3px;top:108.5px;width:1.5px;height:33.3px;background:#454545;"></div>
<div style="position:absolute;left:2302.9px;top:112.9px;width:6.2px;height:6.2px;border-radius:50%;background:#a8a8a8;"></div><div style="position:absolute;left:2302.9px;top:123.10000000000001px;width:6.2px;height:6.2px;border-radius:50%;background:#a8a8a8;"></div><div style="position:absolute;left:2302.9px;top:133.70000000000002px;width:6.2px;height:6.2px;border-radius:50%;background:#a8a8a8;"></div>
<svg style="position:absolute;left:2355px;top:114.2px" width="22" height="20.999999999999986" viewBox="0 0 22 20.999999999999986"><path d="M1 1L21 19.999999999999986M21 1L1 19.999999999999986" stroke="#b2b2b2" stroke-width="3.9" fill="none"/></svg>
<div style="position:absolute;left:1684px;top:212.5px;width:718px;height:1.5px;background:#383838;"></div>
<svg style="position:absolute;left:1707.5px;top:170.8px" width="30" height="30" viewBox="0 0 30 30"><circle cx="15" cy="15" r="12.3" fill="none" stroke="#a0a0a0" stroke-width="4"/><path d="M6.5 6.5L23.5 23.5" stroke="#a0a0a0" stroke-width="4"/></svg>
<div style="position:absolute;left:1760.5px;top:166px;width:1.5px;height:35.5px;background:#454545;"></div>
<div class="t s" style="left:1782px;top:94.6px;font-size:26.4px;color:#cfcfcf;letter-spacing:0.5px;">top</div>
<div style="position:absolute;left:1928.8px;top:177px;width:0;height:0;border-left:8.5px solid transparent;border-right:8.5px solid transparent;border-top:15px solid #9a9a9a;"></div>
<div style="position:absolute;left:1972px;top:166px;width:3.4px;height:35.5px;background:#454545;"></div>
<div style="position:absolute;left:1990px;top:162.4px;width:78px;height:43.2px;box-sizing:border-box;border:1.5px solid #3e3e3e;background:#242424;"></div>
<div style="position:absolute;left:1996px;top:164px;width:59.2px;height:40px;overflow:hidden;"><div class="t s" style="left:5.8px;top:-70.2px;font-size:24.2px;letter-spacing:0.5px;color:#7e7e7e;">Filter</div></div>
<div class="t s" style="left:2085.6px;top:94.2px;font-size:26.4px;color:#cfcfcf;">Info</div>
<div style="position:absolute;left:2225px;top:177px;width:0;height:0;border-left:8.5px solid transparent;border-right:8.5px solid transparent;border-top:15px solid #9a9a9a;"></div>
<div class="t s" style="left:2271.8px;top:94.4px;font-size:26.4px;color:#8c8c8c;letter-spacing:0.85px;">1 item hidden by filters</div>
<div class="t n" style="left:1737.6px;top:148.7px;font-size:24.15px;color:#8b8b8b;font-style:italic;">Console was cleared</div>
<div class="t n" style="right:1144.2px;top:148.7px;font-size:24.15px;color:#bdbdbd;text-decoration:underline;text-underline-offset:3px;text-decoration-thickness:1.6px;">bundle.js:9</div>
<div style="position:absolute;left:1684px;top:257.8px;width:718px;height:1.5px;background:#333;"></div>
<div class="t n" style="left:1737.6px;top:189.9px;font-size:24.15px;color:#c7cfdb;">[React DevTools]</div>
<div class="t n" style="left:1737.6px;top:217.8px;font-size:24.15px;color:#c7cfdb;">Connected</div>
<div class="t n" style="right:1144.2px;top:189.9px;font-size:24.15px;color:#bdbdbd;text-decoration:underline;text-underline-offset:3px;text-decoration-thickness:1.6px;">standalone.js:42</div>
<div style="position:absolute;left:1684px;top:326px;width:718px;height:1.5px;background:#333;"></div>
<div class="t n" style="left:1737.6px;top:256.0px;font-size:24.15px;color:#c7cfdb;">Running application</div>
<div class="t n" style="left:1737.6px;top:284.0px;font-size:24.15px;color:#c7cfdb;">ReduxExample ({</div>
<div class="t n" style="left:1737.6px;top:312.0px;font-size:24.15px;color:#c7cfdb;">    initialProps =     {</div>
<div class="t n" style="left:1737.6px;top:340.0px;font-size:24.15px;color:#c7cfdb;">    };</div>
<div class="t n" style="left:1737.6px;top:368.0px;font-size:24.15px;color:#c7cfdb;">    rootTag = 1;</div>
<div class="t n" style="left:1737.6px;top:396.0px;font-size:24.15px;color:#c7cfdb;">})</div>
<div class="t n" style="right:1144.2px;top:256.0px;font-size:24.15px;color:#bdbdbd;text-decoration:underline;text-underline-offset:3px;text-decoration-thickness:1.6px;">RCTLog.js:38</div>
<div style="position:absolute;left:1684px;top:503.2px;width:718px;height:1.5px;background:#333;"></div>
<div class="t n" style="left:1737.6px;top:435.2px;font-size:24.15px;color:#c7cfdb;">Running application</div>
<div class="t n" style="left:1737.6px;top:463.25px;font-size:24.15px;color:#c7cfdb;">"ReduxExample" with appParams:</div>
<div class="t n" style="left:1737.6px;top:491.3px;font-size:24.15px;color:#c7cfdb;">{"rootTag":1,"initialProps":{}}. __DEV__</div>
<div class="t n" style="left:1737.6px;top:519.35px;font-size:24.15px;color:#c7cfdb;">=== true, development-level warning are</div>
<div class="t n" style="left:1737.6px;top:547.4px;font-size:24.15px;color:#c7cfdb;">ON, performance optimizations are OFF</div>
<div class="t n" style="right:1144.2px;top:435.2px;font-size:24.15px;color:#bdbdbd;text-decoration:underline;text-underline-offset:3px;text-decoration-thickness:1.6px;">infoLog.js:17</div>
<div style="position:absolute;left:1684px;top:656.2px;width:718px;height:1.5px;background:#333;"></div>
<svg style="position:absolute;left:1701px;top:668px" width="18" height="20" viewBox="0 0 18 20"><path d="M3 2.5L13 10L3 17.5" fill="none" stroke="#3b7fe8" stroke-width="3.4"/></svg>
<div style="position:absolute;left:1684px;top:1692px;width:718px;height:60px;background:#292929;"></div>
<div style="position:absolute;left:1684px;top:1691.3px;width:718px;height:1.9px;background:#525252;"></div>
<div style="position:absolute;left:1719.2px;top:1709.9px;width:6.2px;height:6.2px;border-radius:50%;background:#a8a8a8;"></div><div style="position:absolute;left:1719.2px;top:1720.9px;width:6.2px;height:6.2px;border-radius:50%;background:#a8a8a8;"></div><div style="position:absolute;left:1719.2px;top:1731.9px;width:6.2px;height:6.2px;border-radius:50%;background:#a8a8a8;"></div>
<div style="position:absolute;left:1758.5px;top:1698px;width:118.5px;height:56px;box-sizing:border-box;border:2px solid #3a3a3a;background:#242424;"></div>
<div class="t s" style="left:1768.5px;top:1636.4px;font-size:26.4px;color:#dcdcdc;letter-spacing:0.1px;">Console</div>
<svg style="position:absolute;left:2355px;top:1712px" width="22" height="22" viewBox="0 0 22 22"><path d="M1 1L21 21M21 1L1 21" stroke="#b2b2b2" stroke-width="3.9" fill="none"/></svg>
</div></div>
<div class="win" style="left:2483px;top:51.6px;width:932.4px;height:1700.7px;"><div class="pg" style="left:-2483px;top:-51.6px;">
<div class="tb" style="left:2482px;top:51.6px;width:934px;height:44.4px;"></div>
<div class="dot" style="left:2499px;top:62px;background:#d6d6d6;border:1px solid #bdbdbd;"></div><div class="dot" style="left:2539px;top:62px;background:#fdbc2e;border:1px solid #dea123;"></div><div class="dot" style="left:2579px;top:62px;background:#d6d6d6;border:1px solid #bdbdbd;"></div>
<div class="t s" style="left:2949px;transform:translateX(-50%);top:-16px;font-size:26.3px;color:#1c1c1c;letter-spacing:-0.1px;">iPhone 7 Plus – iOS 10.3 (14E8301)</div>
<div style="position:absolute;left:2482px;top:96px;width:934px;height:45px;background:#f0f0f4;"></div>
<div style="position:absolute;left:2482px;top:141px;width:934px;height:99px;background:#d1e6fa;"></div>
<div style="position:absolute;left:2482px;top:240px;width:934px;height:1435.5px;background:#f5fcff;"></div>
<div style="position:absolute;left:2482px;top:1675.5px;width:934px;height:76.5px;background:#4b4c4d;"></div>
<div class="t s" style="left:2497px;top:28.6px;font-size:27px;color:#0a0a0a;letter-spacing:0.68px;">Carrier</div>
<svg style="position:absolute;left:2594px;top:106.5px" width="31" height="23" viewBox="0 0 31 23"><path d="M2.2 7.6C9.6 0.8 21.4 0.8 28.8 7.6" fill="none" stroke="#0a0a0a" stroke-width="3.6" stroke-linecap="butt"/><path d="M7.2 12.8C11.8 8.7 19.2 8.7 23.8 12.8" fill="none" stroke="#0a0a0a" stroke-width="3.6"/><path d="M15.5 22L10.6 17.1C13.3 14.7 17.7 14.7 20.4 17.1Z" fill="#0a0a0a"/></svg>
<div class="t s" style="left:2952.5px;transform:translateX(-50%);top:29px;font-size:27px;color:#0a0a0a;font-weight:700;letter-spacing:1.1px;">4:42 PM</div>
<div style="position:absolute;left:3346.8px;top:108.3px;width:50.8px;height:21.9px;background:#000;border-radius:4.5px;box-sizing:border-box;border:1.2px solid #5a5a5a;"></div>
<div style="position:absolute;left:3398.6px;top:115.2px;width:3.2px;height:8.0px;background:#111;border-radius:0 4px 4px 0;"></div>
<div class="t s" style="left:2949px;transform:translateX(-50%);top:103.7px;font-size:38px;color:#a3bcd6;font-weight:700;letter-spacing:-0.5px;-webkit-text-stroke:0;">Home Screen</div>
<div class="t s" style="left:2949px;transform:translateX(-50%);top:864px;font-size:31.5px;color:#0c0c0c;letter-spacing:0.14px;">Please log in</div>
<div class="t s" style="left:2949px;transform:translateX(-50%);top:929.2px;font-size:40.5px;color:#1142f8;letter-spacing:-0.4px;">Log In</div>
<div style="position:absolute;left:2486.5px;top:1680px;width:131.5px;height:68px;background:#808284;"></div>
<div class="t s" style="left:2552.25px;transform:translateX(-50%);top:1624.8px;font-size:31.5px;color:#fafafa;letter-spacing:0.5px;-webkit-text-stroke:0;">Inspect</div>
<div style="position:absolute;left:2627.3px;top:1680px;width:82.7px;height:68px;background:#333435;"></div>
<div class="t s" style="left:2668.65px;transform:translateX(-50%);top:1624.8px;font-size:31.5px;color:#fafafa;letter-spacing:0.5px;-webkit-text-stroke:0;">Perf</div>
<div style="position:absolute;left:2719.3px;top:1680px;width:144.7px;height:68px;background:#333435;"></div>
<div class="t s" style="left:2791.65px;transform:translateX(-50%);top:1624.8px;font-size:31.5px;color:#fafafa;letter-spacing:0.5px;-webkit-text-stroke:0;">Network</div>
<div style="position:absolute;left:2873.5px;top:1680px;width:188.8px;height:68px;background:#333435;"></div>
<div class="t s" style="left:2967.9px;transform:translateX(-50%);top:1624.8px;font-size:31.5px;color:#fafafa;letter-spacing:0.5px;-webkit-text-stroke:0;">Touchables</div>
<div style="position:absolute;left:3414px;top:96px;width:1.4px;height:1656px;background:#151515;"></div>
</div></div>
</body></html>
